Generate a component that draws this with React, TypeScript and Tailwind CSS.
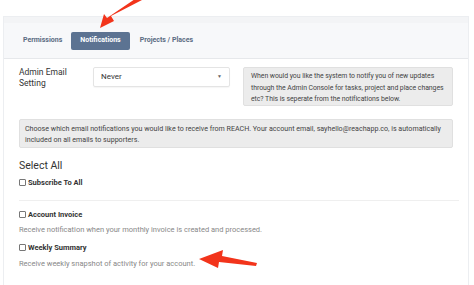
import React from "react";

const font = { fontFamily: "Roboto, 'Liberation Sans', sans-serif" };

function Check({ label }: { label: string }) {
    return (
        <label className="flex items-center gap-[2px] text-[7.5px] font-bold text-[#333] leading-none">
            <span className="inline-block w-[7px] h-[7px] border border-[#777] rounded-[1px] bg-white" />
            <span>{label}</span>
        </label>
    );
}

export default function App() {
    return (
        <div className="relative w-[474px] h-[285px] bg-white overflow-hidden" style={font}>
            <div className="ml-[3px] mt-[16px] w-[466px] h-[270px] border border-[#eceef1] border-b-0 bg-white">
                <div className="h-[6px] bg-[#f3f4f6]" />
                <div className="h-[36px] bg-[#f7f8fa] border-b border-[#e6e8eb] flex items-center pl-[19px] gap-[9px]">
                    <span className="text-[7px] font-bold text-[#5a6b82]">Permissions</span>
                    <span className="h-[18px] px-[9px] flex items-center rounded-[2px] bg-[#5c7392] text-white text-[7px] font-bold">
                        Notifications
                    </span>
                    <span className="text-[7px] font-bold text-[#5a6b82] ml-[1px]">Projects / Places</span>
                </div>

                <div className="pl-[15px] pr-[15px]">
                    <div className="flex pt-[8px]">
                        <div className="w-[74px] text-[8.5px] leading-[11px] text-[#333]">
                            Admin Email
                            <br />
                            Setting
                        </div>
                        <div className="w-[137px] h-[20px] border border-[#e4e4e4] rounded-[2px] flex items-center justify-between px-[7px] text-[8px] text-[#333] shadow-[0_1px_1px_rgba(0,0,0,0.04)]">
                            <span>Never</span>
                            <span className="text-[5px] text-[#666]">▼</span>
                        </div>
                        <div className="ml-[13px] w-[210px] h-[39px] bg-[#ececec] border border-[#e0e0e0] rounded-[2px] pl-[7px] pr-[2px] pt-[3px] text-[6.9px] tracking-[-0.05px] leading-[11.5px] text-[#444]">
                            When would you like the system to notify you of new updates through the Admin Console for tasks, project and place changes etc? This is seperate from the notifications below.
                        </div>
                    </div>

                    <div className="mt-[13px] w-[434px] h-[29px] bg-[#ececec] border border-[#e0e0e0] rounded-[2px] px-[5px] pt-[3px] text-[7.1px] leading-[11px] text-[#444]">
                        Choose which email notifications you would like to receive from REACH. Your account email, sayhello@reachapp.co, is automatically included on all emails to supporters.
                    </div>

                    <div className="mt-[11px] text-[10.5px] text-[#333] leading-[14px]">Select All</div>
                    <div className="mt-[6px]">
                        <Check label="Subscribe To All" />
                    </div>
                    <div className="mt-[13px] border-t border-[#efefef] w-[440px]" />

                    <div className="mt-[10px]">
                        <Check label="Account Invoice" />
                    </div>
                    <div className="mt-[7px] text-[7.5px] text-[#888] leading-[10px]">
                        Receive notification when your monthly invoice is created and processed.
                    </div>

                    <div className="mt-[9px]">
                        <Check label="Weekly Summary" />
                    </div>
                    <div className="mt-[7px] text-[7.5px] text-[#888] leading-[10px]">
                        Receive weekly snapshot of activity for your account.
                    </div>
                </div>
            </div>

            <svg className="absolute left-0 top-0" width="474" height="285" viewBox="0 0 474 285">
                <path d="M142 0 L111 16 L114 21 L100 28 L104 14 L107 18 L138 -3 Z" fill="#f2341b" />
                <path d="M257 263 L222 256 L223 250 L199 259 L218 268 L219 262 L256 266 Z" fill="#f2341b" />
            </svg>
        </div>
    );
}
